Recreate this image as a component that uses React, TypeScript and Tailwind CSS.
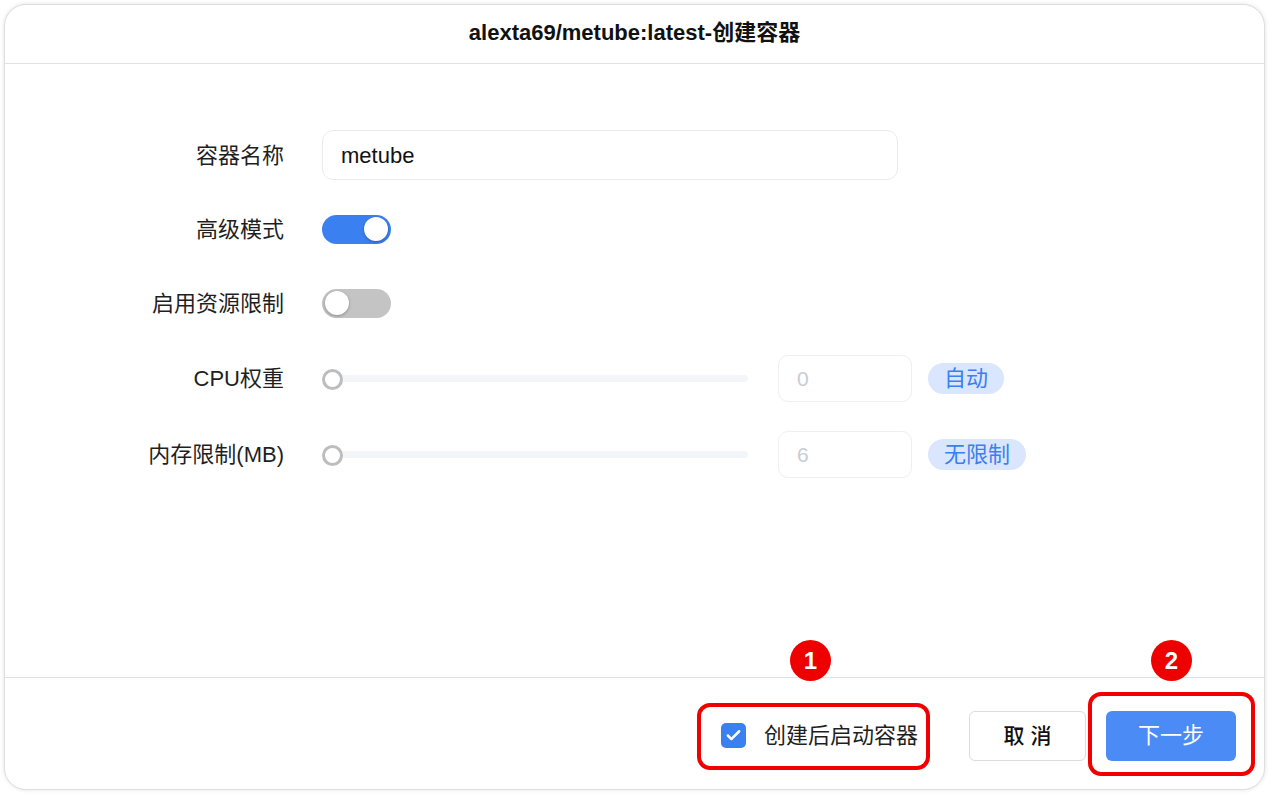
import { Check } from 'lucide-react';

const font = { fontFamily: '"Liberation Sans", "Noto Sans CJK SC", sans-serif' };

function Toggle({ on }: { on: boolean }) {
  return (
    <div
      className={`w-[69px] h-[29px] rounded-full flex items-center px-[3px] ${
        on ? 'bg-[#3b80f1] justify-end' : 'bg-[#c4c4c4] justify-start'
      }`}
    >
      <div className="w-[24px] h-[24px] rounded-full bg-white shadow-[0_1px_3px_rgba(0,0,0,0.3)]" />
    </div>
  );
}

function SliderRow({ value, badge }: { value: string; badge: string }) {
  return (
    <div className="flex items-center">
      {/* Slider */}
      <div className="relative w-[426px] h-[22px] flex items-center">
        <div className="ml-[10px] flex-1 h-[7px] rounded-full bg-[#f3f6f9]" />
        <div className="absolute left-0 top-[1px] w-[21px] h-[21px] rounded-full border-[3px] border-[#bdbdbd] bg-white" />
      </div>
      {/* Number input */}
      <div className="ml-[30px] w-[134px] h-[47px] rounded-[10px] border border-[#efefef] flex items-center px-[18px] text-[21px] text-[#c9ccd3]">
        {value}
      </div>
      <span className="ml-[16px] h-[31px] px-[16px] rounded-full bg-[#d9e6fd] text-[#3b7ff0] text-[22px] flex items-center">
        {badge}
      </span>
    </div>
  );
}

function Row({ label, h, children }: { label: string; h: string; children: React.ReactNode }) {
  return (
    <div className={`flex items-center ${h}`}>
      <div className="w-[279px] text-right text-[22px] text-[#1f1f1f]">{label}</div>
      <div className="ml-[38px]">{children}</div>
    </div>
  );
}

export default function App() {
  return (
    <div className="relative w-[1269px] h-[794px] bg-white p-[4px]" style={font}>
      <div className="h-[786px] w-[1261px] rounded-[22px] border border-[#dedede] shadow-[0_0_4px_rgba(0,0,0,0.12)] bg-white flex flex-col overflow-hidden">
        {/* Header */}
        <div className="h-[59px] shrink-0 border-b border-[#e2e2e2] flex items-center justify-center pb-[3px]">
          <h1 className="text-[22px] font-bold text-[#111]">alexta69/metube:latest-创建容器</h1>
        </div>

        {/* Body */}
        <div className="flex-1 pt-[54px]">
          <Row label="容器名称" h="h-[74px]">
            <div className="w-[576px] h-[50px] rounded-[11px] border border-[#ebebeb] flex items-center px-[18px] text-[22px] text-[#111]">
              metube
            </div>
          </Row>
          <Row label="高级模式" h="h-[74px]">
            <Toggle on />
          </Row>
          <Row label="启用资源限制" h="h-[74px]">
            <Toggle on={false} />
          </Row>
          <Row label="CPU权重" h="h-[77px]">
            <SliderRow value="0" badge="自动" />
          </Row>
          <Row label="内存限制(MB)" h="h-[75px]">
            <SliderRow value="6" badge="无限制" />
          </Row>
        </div>

        {/* Footer */}
        <div className="h-[112px] shrink-0 border-t border-[#e2e2e2] flex items-center justify-end pr-[28px] pt-[4px]">
          <label className="flex items-center gap-[18px] text-[22px] text-[#1f1f1f]">
            <span className="w-[25px] h-[25px] rounded-[5px] bg-[#3b80f1] flex items-center justify-center">
              <Check className="w-[17px] h-[17px] text-white" strokeWidth={3.5} />
            </span>
            创建后启动容器
          </label>
          <button className="ml-[51px] w-[117px] h-[50px] rounded-[6px] border border-[#dcdcdc] bg-white text-[21px] text-[#111] font-medium">
            取 消
          </button>
          <button className="ml-[20px] w-[130px] h-[50px] rounded-[6px] bg-[#4a8bf5] text-[22px] text-white">
            下一步
          </button>
        </div>
      </div>

      {/* Annotation overlays */}
      <div className="absolute left-[697px] top-[703px] w-[233px] h-[67px] rounded-[13px] border-[4px] border-[#f00000]" />
      <div className="absolute left-[1088px] top-[692px] w-[167px] h-[84px] rounded-[13px] border-[4px] border-[#f00000]" />
      <div className="absolute left-[790px] top-[640px] w-[41px] h-[41px] rounded-full bg-[#ee0000] text-white text-[24px] font-bold flex items-center justify-center">
        1
      </div>
      <div className="absolute left-[1151px] top-[640px] w-[41px] h-[41px] rounded-full bg-[#ee0000] text-white text-[24px] font-bold flex items-center justify-center">
        2
      </div>
    </div>
  );
}
